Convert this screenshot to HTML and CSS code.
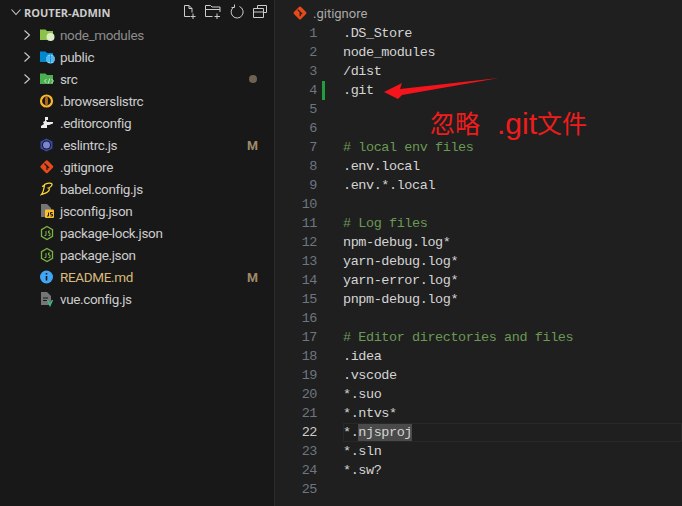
FILE: index.html
```html
<!DOCTYPE html>
<html lang="en">

<head>
    <meta charset="UTF-8">
    <title>.gitignore - router-admin</title>
    <link rel="stylesheet" href="styles.css">
</head>

<body>
    <div class="window">
        <aside class="sidebar">
            <div class="sidebar-head">
                <svg class="chev" width="16" height="16" viewBox="0 0 16 16"><path d="M3.500 5.500 8 10.500l4.500-5" /></svg>
                <span class="project">ROUTER-ADMIN</span>
                <div class="actions">
                    <svg width="16" height="16" viewBox="0 0 16 16"><path d="M9 12.500H3.500v-11h4.500l3 3v4M8 1.500v3h3M12 9.500v5.500M9.500 12.500h5" /></svg>
                    <svg width="18" height="16" viewBox="0 0 18 16"><path d="M8.500 12.500h-7v-11h5l1.500 1.500h8v5M1.500 5.500h14.500M13 9.500v5.500M10.500 12.500h5.500" /></svg>
                    <svg width="16" height="16" viewBox="0 0 16 16"><path d="M5 2.900A6 6 0 1 0 10.500 2.500M5.500 0.500v3h-3" /></svg>
                    <svg width="16" height="16" viewBox="0 0 16 16"><path d="M5.500 4.500v-3h9v7h-3M1.500 4.500h10v9h-10zM1.500 8h10" /></svg>
                </div>
            </div>

            <div class="row">
                <svg class="chev" width="16" height="16" viewBox="0 0 16 16"><path d="M5.500 3.500 10.500 8l-5 4.500" /></svg>
                <svg class="icon" width="16" height="16" viewBox="0 0 16 16"><path fill="#8bc34a" d="M1 2.500h5.500L8 4h6v9H1z" /><circle cx="11.500" cy="10" r="4" fill="#dcedc8" /></svg>
                <span class="name muted">node_modules</span>
            </div>
            <div class="row">
                <svg class="chev" width="16" height="16" viewBox="0 0 16 16"><path d="M5.500 3.500 10.500 8l-5 4.500" /></svg>
                <svg class="icon" width="16" height="16" viewBox="0 0 16 16"><path fill="#0288d1" d="M1 2.500h5.500L8 4h6v9H1z" /><circle cx="11.500" cy="10" r="4.500" fill="#81d4fa" /><path d="M7 10h9M11.500 5.500v9M8 8h7M8 12h7" stroke="#0288d1" stroke-width=".7" /></svg>
                <span class="name">public</span>
            </div>
            <div class="row">
                <svg class="chev" width="16" height="16" viewBox="0 0 16 16"><path d="M5.500 3.500 10.500 8l-5 4.500" /></svg>
                <svg class="icon" width="16" height="16" viewBox="0 0 16 16"><path fill="#4caf50" d="M1 2.500h5.500L8 4h6v9H1z" /><path d="M7.500 8 5.500 10l2 2M12.500 8l2 2-2 2M10.800 7.500l-1.600 5" fill="none" stroke="#c8e6c9" /></svg>
                <span class="name">src</span>
                <span class="dot"></span>
            </div>
            <div class="row leaf">
                <svg class="icon" width="16" height="16" viewBox="0 0 16 16"><circle cx="7.500" cy="8" r="5.500" fill="none" stroke="#f9b82a" stroke-width="2.200" /><ellipse cx="7.500" cy="8" rx="1.500" ry="5" fill="#b06a20" /></svg>
                <span class="name">.browserslistrc</span>
            </div>
            <div class="row leaf">
                <svg class="icon" width="16" height="16" viewBox="0 0 16 16"><path fill="#eeeeee" d="M6 2h3v3H7l1 2h6v1.500L10 10H8v3H2v-2l3-2-1-2 2-1z" /></svg>
                <span class="name">.editorconfig</span>
            </div>
            <div class="row leaf">
                <svg class="icon" width="16" height="16" viewBox="0 0 16 16"><path fill="#3949ab" d="M7.500 1.500l6 3v7l-6 3-6-3v-7z" /><circle cx="7.500" cy="8" r="4.500" fill="#181818" /><circle cx="7.500" cy="8" r="3.500" fill="#7986cb" /></svg>
                <span class="name">.eslintrc.js</span>
                <span class="badge">M</span>
            </div>
            <div class="row leaf">
                <svg class="icon" width="16" height="16" viewBox="0 0 16 16"><rect x="2.800" y="2.800" width="10" height="10" rx="1.500" transform="rotate(45 7.800 7.800)" fill="#e64a19" /><path d="M5.500 4.500 8 7v4M8 7l2 2" fill="none" stroke="#181818" stroke-width="1.200" /></svg>
                <span class="name">.gitignore</span>
            </div>
            <div class="row leaf">
                <svg class="icon" width="16" height="16" viewBox="0 0 16 16"><path d="M5.500 3.500C8 2 12 1.500 13 3c.5 1.500-2 3.500-3.500 4 1.500.5 1 2.500-1 4-2 1.500-4.500 2-6 2.500 1.500-2 2.500-6 3-9.500zM3 5.500l3-1.500" fill="none" stroke="#fdd835" stroke-width="1.300" /></svg>
                <span class="name">babel.config.js</span>
            </div>
            <div class="row leaf">
                <svg class="icon" width="16" height="16" viewBox="0 0 16 16"><path fill="#757575" d="M2 1h6l4 4v9H2z" /><rect x="6" y="6.500" width="9" height="8.500" rx="1" fill="#fbc02d" /><path d="M9.500 9.500v3.500H8M13.500 9.500H11.500v1.800h2V13h-2" fill="none" stroke="#181818" /></svg>
                <span class="name">jsconfig.json</span>
            </div>
            <div class="row leaf">
                <svg class="icon" width="16" height="16" viewBox="0 0 16 16"><path fill="none" stroke="#7cb342" stroke-width="1.300" d="M8 1.500l5.500 3.200v6.600L8 14.500l-5.500-3.200V4.700z" /><path fill="none" stroke="#7cb342" d="M7 6v4.500H5.500M11 6H9.500v2H11v2.500H9.500" /></svg>
                <span class="name">package-lock.json</span>
            </div>
            <div class="row leaf">
                <svg class="icon" width="16" height="16" viewBox="0 0 16 16"><path fill="none" stroke="#7cb342" stroke-width="1.300" d="M8 1.500l5.500 3.200v6.600L8 14.500l-5.500-3.200V4.700z" /><path fill="none" stroke="#7cb342" d="M7 6v4.500H5.500M11 6H9.500v2H11v2.500H9.500" /></svg>
                <span class="name">package.json</span>
            </div>
            <div class="row leaf">
                <svg class="icon" width="16" height="16" viewBox="0 0 16 16"><circle cx="7.500" cy="8" r="6.500" fill="#42a5f5" /><path d="M7.500 7v4.500M7.500 4v1.500" stroke="#181818" stroke-width="1.600" fill="none" /></svg>
                <span class="name modified">README.md</span>
                <span class="badge">M</span>
            </div>
            <div class="row leaf">
                <svg class="icon" width="16" height="16" viewBox="0 0 16 16"><path fill="#757575" d="M2 1h6l4 4v9H2z" /><path d="M4 7h5M4 9.500h4" stroke="#181818" fill="none" /><path d="M8.500 9 11 14.500 13.500 9" fill="none" stroke="#41b883" stroke-width="1.400" /></svg>
                <span class="name">vue.config.js</span>
            </div>
        </aside>

        <main class="editor">
            <div class="tab">
                <svg class="icon" width="16" height="16" viewBox="0 0 16 16"><rect x="3" y="3" width="10" height="10" rx="1.500" transform="rotate(45 8 8)" fill="#e64a19" /><path d="M5.700 4.700 8.200 7.200v4M8.200 7.200l2 2" fill="none" stroke="#1f1f1f" stroke-width="1.200" /></svg>
                <span>.gitignore</span>
            </div>
            <div class="code">
                <div class="line"><span class="num">1</span><span class="text">.DS_Store</span></div>
                <div class="line"><span class="num">2</span><span class="text">node_modules</span></div>
                <div class="line"><span class="num">3</span><span class="text">/dist</span></div>
                <div class="line added"><span class="num">4</span><span class="text">.git</span></div>
                <div class="line"><span class="num">5</span><span class="text"></span></div>
                <div class="line"><span class="num">6</span><span class="text"></span></div>
                <div class="line"><span class="num">7</span><span class="text comment"># local env files</span></div>
                <div class="line"><span class="num">8</span><span class="text">.env.local</span></div>
                <div class="line"><span class="num">9</span><span class="text">.env.*.local</span></div>
                <div class="line"><span class="num">10</span><span class="text"></span></div>
                <div class="line"><span class="num">11</span><span class="text comment"># Log files</span></div>
                <div class="line"><span class="num">12</span><span class="text">npm-debug.log*</span></div>
                <div class="line"><span class="num">13</span><span class="text">yarn-debug.log*</span></div>
                <div class="line"><span class="num">14</span><span class="text">yarn-error.log*</span></div>
                <div class="line"><span class="num">15</span><span class="text">pnpm-debug.log*</span></div>
                <div class="line"><span class="num">16</span><span class="text"></span></div>
                <div class="line"><span class="num">17</span><span class="text comment"># Editor directories and files</span></div>
                <div class="line"><span class="num">18</span><span class="text">.idea</span></div>
                <div class="line"><span class="num">19</span><span class="text">.vscode</span></div>
                <div class="line"><span class="num">20</span><span class="text">*.suo</span></div>
                <div class="line"><span class="num">21</span><span class="text">*.ntvs*</span></div>
                <div class="line current"><span class="num">22</span><span class="text">*.<span class="selected">njsproj</span></span></div>
                <div class="line"><span class="num">23</span><span class="text">*.sln</span></div>
                <div class="line"><span class="num">24</span><span class="text">*.sw?</span></div>
                <div class="line"><span class="num">25</span><span class="text"></span></div>
            </div>

            <svg class="arrow" width="120" height="30" viewBox="0 0 120 30"><path d="M0 14 18 5 16 11 115 0 18 17 14 21z" /></svg>
            <div class="note"><span>忽略</span><span class="note-name">.git</span><span>文件</span></div>
        </main>
    </div>
</body>

</html>
```

FILE: styles.css
```css
* {
    box-sizing: border-box;
}

html,
body {
    margin: 0;
    height: 100%;
}

body {
    background: #1f1f1f;
    overflow: hidden;
}

.window {
    display: flex;
    height: 506px;
}

.sidebar {
    width: 275px;
    flex: none;
    background: #181818;
    border-right: 1px solid #2b2b2b;
    font-family: Roboto, "Noto Sans", sans-serif;
    font-size: 13.500px;
    color: #cccccc;
}

.sidebar svg {
    flex: none;
}

.sidebar-head {
    display: flex;
    align-items: center;
    height: 24px;
    padding-left: 8px;
}

.project {
    font-family: "Open Sans", "Noto Sans", sans-serif;
    font-size: 11px;
    font-weight: 700;
    color: #cccccc;
}

.actions {
    display: flex;
    align-items: center;
    gap: 7px;
    margin-left: auto;
    padding-right: 6px;
}

.actions path {
    fill: none;
    stroke: #cccccc;
    stroke-width: 1;
}

.chev path {
    fill: none;
    stroke: #cccccc;
    stroke-width: 1.100;
}

.row {
    display: flex;
    align-items: center;
    height: 22px;
    padding-left: 19px;
    padding-right: 16px;
}

.row.leaf {
    padding-left: 39px;
}

.row .chev {
    margin-right: 4px;
}

.row .icon {
    margin-right: 5px;
}

.name {
    line-height: 22px;
    letter-spacing: -0.350px;
}

.muted {
    color: #8c8c8c;
}

.modified {
    color: #d7ba7d;
}

.dot {
    width: 8px;
    height: 8px;
    margin-left: auto;
    margin-right: 1px;
    border-radius: 50%;
    background: #6e6250;
}

.badge {
    margin-left: auto;
    font-weight: 700;
    font-size: 12.500px;
    color: #a08a68;
}

.editor {
    position: relative;
    flex: 1;
    min-width: 0;
    background: #1f1f1f;
}

.tab {
    display: flex;
    align-items: center;
    gap: 5px;
    height: 24px;
    padding-left: 17px;
    padding-top: 2px;
    font-family: Roboto, "Noto Sans", sans-serif;
    font-size: 13px;
    color: #a9a9a9;
}

.code {
    font-family: "Liberation Mono", monospace;
    font-size: 13.500px;
    letter-spacing: -0.430px;
    color: #d4d4d4;
}

.line {
    display: flex;
    height: 19px;
    line-height: 19px;
}

.num {
    width: 42px;
    flex: none;
    text-align: right;
    color: #6e7681;
}

.text {
    display: block;
    flex: 1;
    margin-left: 26px;
}

.added {
    position: relative;
}

.added::before {
    content: "";
    position: absolute;
    left: 47px;
    top: 0;
    width: 3px;
    height: 19px;
    background: #1f9d3f;
}

.comment {
    color: #6a9955;
}

.current .num {
    color: #cccccc;
}

.current .text {
    outline: 1px solid #282828;
    outline-offset: -1px;
}

.selected {
    display: inline-block;
    height: 19px;
    background: #4a4a4a;
}

.arrow {
    position: absolute;
    left: 109px;
    top: 78px;
}

.arrow path {
    fill: #f5141c;
}

.note {
    position: absolute;
    left: 155px;
    top: 107px;
    display: flex;
    align-items: center;
    font-family: "Liberation Sans", "Noto Sans CJK SC", sans-serif;
    font-size: 25px;
    line-height: 34px;
    color: #f01c1c;
}

.note-name {
    margin-left: 17px;
    font-size: 30px;
}
```
